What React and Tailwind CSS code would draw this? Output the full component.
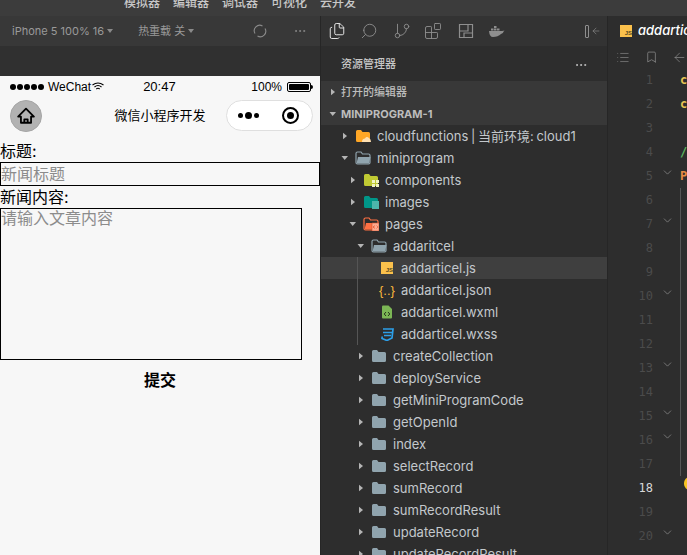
import { ChevronDown, Ellipsis, Files, Search, GitBranch, Blocks, ArrowLeft, Bookmark, List } from 'lucide-react';

const cjk = "font-['Inter','Noto_Sans_CJK_SC',sans-serif]";

const Caret = ({ open }) => (
  <svg width="8" height="8" viewBox="0 0 8 8" className="shrink-0">
    {open ? <path d="M0.5 2 L7 2 L3.7 6 Z" fill="#b5b5b5" /> : <path d="M2 0.7 L6 4 L2 7.3 Z" fill="#b5b5b5" />}
  </svg>
);

const Caret2 = () => (
  <svg width="6" height="4" viewBox="0 0 6 4"><path d="M0 0 H6 L3 4 Z" fill="#8a8a8a" /></svg>
);

const Folder = ({ open, color = '#90a4ae', badge }) => (
  <svg width="16" height="14" viewBox="0 0 16 14" className="shrink-0">
    <path d="M1 2.5 Q1 1 2.5 1 L6 1 L7.5 3 L13.5 3 Q15 3 15 4.5 L15 11.5 Q15 13 13.5 13 L2.5 13 Q1 13 1 11.5 Z" fill={open ? 'none' : color} stroke={color} strokeWidth={open ? 1.2 : 0} />
    {open && <path d="M3 6 L15.5 6 L14 12.5 L1.5 12.5 Z" fill={color} />}
    {badge === 'cloud' && <path d="M7 13 Q7 9.5 10 9.5 Q11.5 7 14 9 Q16 10 16 13 Z" fill="#ffe0b2" />}
    {badge === 'grid' && <path d="M9 7 h3 v3 h-3 Z M13 7 h3 v3 h-3 Z M9 11 h3 v3 h-3 Z M13 11 h3 v3 h-3 Z" fill="#f0f4c3" />}
    {badge === 'image' && <path d="M9 6 h7 v8 h-7 Z" fill="#4db6ac" />}
    {badge === 'code' && <path d="M9 6 h7 v8 h-7 Z M11.5 8.5 L10 10 L11.5 11.5 M13.5 8.5 L15 10 L13.5 11.5" fill="#ffab91" stroke="#d84f2a" strokeWidth="0.6" />}
  </svg>
);

const JsIcon = () => (
  <span className="flex h-3 w-3 shrink-0 items-end justify-end bg-[#fbc14c] font-['Liberation_Sans',sans-serif] text-[6px] leading-[7px] font-bold text-[#5c4a1e]">JS</span>
);

const JsonIcon = () => (
  <span className="w-4 shrink-0 text-center font-['Liberation_Sans',sans-serif] text-[13px] leading-none text-[#f9b73d]">{'{..}'}</span>
);

const XmlIcon = () => (
  <svg width="12" height="14" viewBox="0 0 12 14" className="shrink-0">
    <path d="M1 1.5 Q1 0.5 2 0.5 L7.5 0.5 L11 4 L11 12.5 Q11 13.5 10 13.5 L2 13.5 Q1 13.5 1 12.5 Z" fill="#7cb655" />
    <path d="M5 7 L3.2 9 L5 11 M7 7 L8.8 9 L7 11" stroke="#26331c" strokeWidth="1" fill="none" />
  </svg>
);

const CssIcon = () => (
  <svg width="13" height="13" viewBox="0 0 13 13" className="shrink-0">
    <path d="M2 1 L12 1 L11 10 L6 12.5 L1 10.5 L1.2 8.5" stroke="#2d9fe8" strokeWidth="1.7" fill="none" />
    <path d="M2 4.5 L11 4.5 M3 7.5 L10 7.5" stroke="#2d9fe8" strokeWidth="1.7" />
  </svg>
);

const tree = [
  { name: 'cloudfunctions | 当前环境: cloud1', depth: 0, icon: <Folder color="#ffa726" badge="cloud" /> },
  { name: 'miniprogram', depth: 0, open: true, icon: <Folder open color="#90a4ae" /> },
  { name: 'components', depth: 1, icon: <Folder color="#c0ca33" badge="grid" /> },
  { name: 'images', depth: 1, icon: <Folder color="#009688" badge="image" /> },
  { name: 'pages', depth: 1, open: true, icon: <Folder open color="#ff7043" badge="code" /> },
  { name: 'addaritcel', depth: 2, open: true, icon: <Folder open /> },
  { name: 'addarticel.js', depth: 3, file: true, active: true, icon: <JsIcon /> },
  { name: 'addarticel.json', depth: 3, file: true, icon: <JsonIcon /> },
  { name: 'addarticel.wxml', depth: 3, file: true, icon: <XmlIcon /> },
  { name: 'addarticel.wxss', depth: 3, file: true, icon: <CssIcon /> },
  ...['createCollection', 'deployService', 'getMiniProgramCode', 'getOpenId', 'index', 'selectRecord', 'sumRecord', 'sumRecordResult', 'updateRecord', 'updateRecordResult'].map(name => ({ name, depth: 2, icon: <Folder /> })),
];

const indent = ['pl-[20px]', 'pl-[28px]', 'pl-[36px]', 'pl-[56px]'];

const TreeRow = ({ item }) => (
  <div className={`flex h-[22px] shrink-0 items-center ${indent[item.depth]} ${item.active ? 'bg-[#3f3f3f]' : ''}`}>
    {!item.file && <Caret open={item.open} />}
    <span className={`flex w-[20px] shrink-0 items-center ${item.file ? 'justify-center' : 'ml-[6px]'}`}>{item.icon}</span>
    <span className={`whitespace-nowrap pt-[2px] text-[13px] [word-spacing:-1px] text-[#c3c8cc] ${item.file ? 'ml-[4px]' : 'ml-[2px]'}`}>{item.name}</span>
  </div>
);

const lines = [
  { n: 1, mark: 'c', color: 'text-[#e5c454]' },
  { n: 2, mark: 'c', color: 'text-[#e5c454]' },
  { n: 3 },
  { n: 4, mark: '/', color: 'text-[#5fb65f]' },
  { n: 5, fold: true, mark: 'P', color: 'text-[#e88b43]' },
  { n: 6 }, { n: 7, fold: true }, { n: 8 }, { n: 9 }, { n: 10, fold: true },
  { n: 11 }, { n: 12 }, { n: 13, fold: true }, { n: 14 }, { n: 15, fold: true },
  { n: 16, fold: true }, { n: 17 }, { n: 18, current: true }, { n: 19 }, { n: 20, fold: true },
];

const statusDots = [0, 1, 2, 3, 4];

export default function App() {
  return (
    <div className={`flex h-[555px] w-[687px] flex-col overflow-hidden bg-[#2d2d2d] ${cjk}`}>
      {/* window title bar, menu is cut by the crop */}
      <div className="flex h-[16px] shrink-0 items-start gap-[13px] overflow-hidden bg-[#3c3c3c] pl-[124px] text-[12px] leading-[16px] font-medium text-[#c8c8c8]">
        <span className="mt-[-5px]">模拟器</span><span className="mt-[-5px]">编辑器</span><span className="mt-[-5px]">调试器</span><span className="mt-[-5px]">可视化</span><span className="mt-[-5px]">云开发</span>
      </div>

      <div className="flex min-h-0 flex-1">
        {/* simulator */}
        <div className="flex w-[320px] shrink-0 flex-col">
          <div className="flex h-[30px] shrink-0 items-center bg-[#383838] text-[11px] text-[#9a9a9a]">
            <span className="ml-[12px] flex items-center gap-[3px]">iPhone 5 100% 16<Caret2 /></span>
            <span className="ml-[25px] flex items-center gap-[3px]">热重载 关<Caret2 /></span>
            <svg width="14" height="14" viewBox="0 0 14 14" className="ml-[59px]"><path d="M2 9.5 A5.5 5.5 0 0 1 9.5 2 M12 4.5 A5.5 5.5 0 0 1 4.5 12" stroke="#8a8a8a" strokeWidth="1.1" fill="none" /></svg>
            <Ellipsis size={14} strokeWidth={1.5} className="ml-[26px] text-[#8a8a8a]" />
          </div>
          <div className="h-[30px] shrink-0 bg-[#303030]" />
          <div className="min-h-0 flex-1 bg-[#f7f7f7] text-black">
            <div className="flex h-[21px] items-center pr-[9px] pl-[10px] font-['Liberation_Sans','Noto_Sans_CJK_SC',sans-serif] text-[12px]">
              <span className="flex w-[38px] gap-[1px]">
                {statusDots.map(d => <span key={d} className="h-[6px] w-[6px] rounded-full bg-black" />)}
              </span>
              <span>WeChat</span>
              <svg width="12" height="9" viewBox="0 0 12 9" className="ml-[1px]"><path d="M0.5 3 Q6 -1 11.5 3 M2.5 5 Q6 2 9.5 5 M4.3 7 Q6 5.5 7.7 7" stroke="#000" strokeWidth="1.1" fill="none" /></svg>
              <span className="ml-[39px] text-[13px]">20:47</span>
              <span className="ml-auto text-[12px]">100%</span>
              <span className="relative ml-[5px] flex h-[10px] w-[24px] items-center rounded-[2px] border border-black p-[1px]">
                <span className="h-full w-full rounded-[1px] bg-black" />
                <span className="absolute right-[-3px] h-[4px] w-[2px] rounded-r-sm bg-black" />
              </span>
            </div>
            <div className="flex h-[44px] items-start pt-[3px] pr-[7px] pl-[10px]">
              <span className="flex h-[32px] w-[32px] items-center justify-center rounded-full border border-[#a5a5a5] bg-[#b2b2b2]">
                <svg width="18" height="18" viewBox="0 0 16 16"><path d="M8 1.5 L15 8.5 L12.5 8.5 L12.5 14 L3.5 14 L3.5 8.5 L1 8.5 Z M6.5 14 L6.5 11 L9.5 11 L9.5 14" stroke="#000" strokeWidth="1.6" fill="none" strokeLinejoin="round" /></svg>
              </span>
              <span className="ml-[72px] w-[92px] pt-[6px] text-center text-[13px] leading-[18px]">微信小程序开发</span>
              <span className="ml-[20px] flex h-[31px] w-[87px] items-center rounded-full border border-[#dfdfdf] bg-white pl-[11px]">
                <span className="h-[5px] w-[5px] rounded-full bg-black" />
                <span className="ml-[2px] h-[7px] w-[7px] rounded-full bg-black" />
                <span className="ml-[2px] h-[5px] w-[5px] rounded-full bg-black" />
                <span className="ml-[23px] flex h-[17px] w-[17px] items-center justify-center rounded-full border-[2px] border-black">
                  <span className="h-[7px] w-[7px] rounded-full bg-black" />
                </span>
              </span>
            </div>
            <div className="mt-[-1px] text-[16px] leading-[22px]">标题:</div>
            <div className="flex h-[24px] w-[320px] items-center border border-black text-[16px] text-[#8c8c8c]">新闻标题</div>
            <div className="text-[16px] leading-[22px]">新闻内容:</div>
            <div className="h-[152px] w-[302px] border border-black text-[16px] leading-[18px] text-[#8c8c8c]">请输入文章内容</div>
            <div className="mt-[9px] text-center text-[16px] leading-[22px] font-bold">提交</div>
          </div>
        </div>

        {/* explorer */}
        <div className="flex w-[287px] shrink-0 flex-col border-l border-[#262626] bg-[#2d2d2d]">
          <div className="flex h-[30px] shrink-0 items-center bg-[#333333] pl-[7px] text-[#8e8e8e]">
            <Files size={18} strokeWidth={1.3} className="text-[#e6e6e6]" />
            <Search size={18} strokeWidth={1.2} className="ml-[14px] -scale-x-100" />
            <GitBranch size={18} strokeWidth={1.2} className="ml-[15px]" />
            <Blocks size={18} strokeWidth={1.2} className="ml-[13px]" />
            <svg width="16" height="16" viewBox="0 0 16 16" className="ml-[16px]"><path d="M1.5 1.5 H14.5 V14.5 H1.5 Z M1.5 8 H10 V1.5 M6 14.5 V10 H14.5" stroke="currentColor" strokeWidth="1.2" fill="none" /></svg>
            <svg width="17" height="13" viewBox="0 0 17 13" className="ml-[14px]"><path d="M1 6 H14 Q16 6 16.5 5 Q15.5 8 13 9 Q10 12 5 12 Q1.5 12 1 6 Z M3 3.5 h2.5 v2 H3 Z M6 3.5 h2.5 v2 H6 Z M9 3.5 h2.5 v2 H9 Z M6 1 h2.5 v2 H6 Z" fill="currentColor" /></svg>
            <span className="ml-[80px] h-[13px] w-[4px] rounded-[1px] border border-current" />
            <ArrowLeft size={10} strokeWidth={1.5} className="ml-[2px]" />
          </div>
          <div className="flex h-[35px] shrink-0 items-center justify-between pt-[2px] pr-[19px] pl-[20px] text-[11px] font-medium text-[#c8c8c8]">
            <span>资源管理器</span>
            <Ellipsis size={14} strokeWidth={1.5} />
          </div>
          <div className="flex h-[22px] shrink-0 items-center bg-[#383838] pl-[8px] text-[11px] font-medium text-[#bdbdbd]">
            <Caret />
            <span className="ml-[4px]">打开的编辑器</span>
          </div>
          <div className="flex h-[22px] shrink-0 items-center bg-[#383838] pl-[8px] text-[11px] font-bold text-[#bdbdbd]">
            <Caret open />
            <span className="ml-[4px]">MINIPROGRAM-1</span>
          </div>
          <div className="relative flex min-h-0 flex-1 flex-col overflow-hidden">
            {tree.map(item => <TreeRow key={item.name} item={item} />)}
            <span className="absolute top-[132px] left-[36px] h-[88px] w-px bg-[#555555]" />
          </div>
        </div>

        {/* editor */}
        <div className="flex min-w-0 flex-1 flex-col border-l border-[#262626] bg-[#2d2d2d]">
          <div className="flex h-[30px] shrink-0 items-center gap-[6px] overflow-hidden bg-[#2d2d2d] pl-[12px]">
            <JsIcon />
            <span className="text-[13px] font-medium whitespace-nowrap text-white italic">addarticel.js</span>
          </div>
          <div className="flex h-[22px] shrink-0 items-center overflow-hidden pl-[8px] text-[#9a9a9a]">
            <List size={17} strokeWidth={1} />
            <Bookmark size={16} strokeWidth={1.2} className="ml-[15px]" />
            <ArrowLeft size={15} strokeWidth={1} className="ml-[14px] shrink-0" />
          </div>
          <div className="relative min-h-0 flex-1 overflow-hidden font-['DejaVu_Sans_Mono',monospace] text-[12px]">
            {lines.map(line => (
              <div key={line.n} className="flex h-[24px] items-center">
                <span className={`w-[51px] shrink-0 pr-[6px] text-right ${line.current ? 'text-[#d8d8d8]' : 'text-[#4b4b4b]'}`}>{line.n}</span>
                <span className="flex w-[17px] shrink-0 justify-center pb-[8px]">
                  {line.fold && <ChevronDown size={13} strokeWidth={1.2} className="text-[#9a9a9a]" />}
                </span>
                {line.mark && <span className={`ml-[4px] font-bold ${line.color}`}>{line.mark}</span>}
              </div>
            ))}
            <span className="absolute top-[120px] left-[72px] h-[288px] w-px bg-[#555555]" />
            <span className="absolute top-[409px] left-[76px] h-[13px] w-[6px] rounded-l-full bg-[#f7c325]" />
          </div>
        </div>
      </div>
    </div>
  );
}
